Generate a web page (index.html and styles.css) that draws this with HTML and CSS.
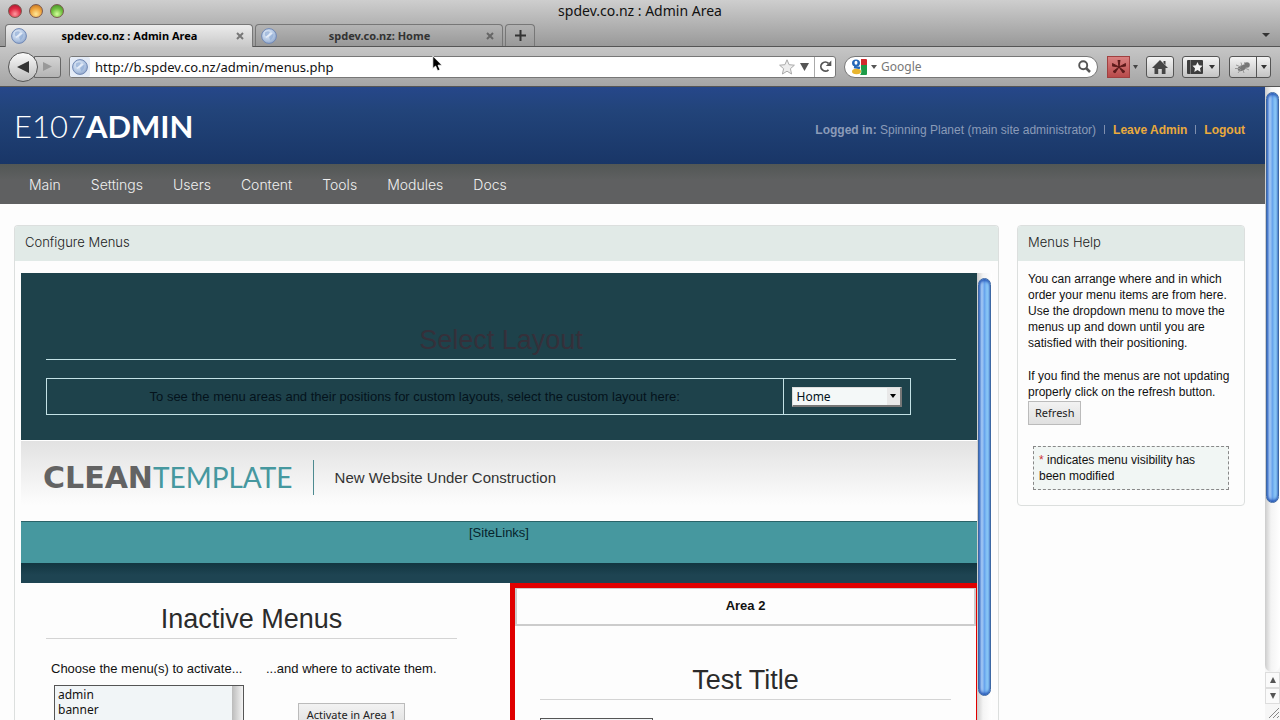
FILE: index.html
```html
<!DOCTYPE html>
<html lang="en">
<head>
<meta charset="utf-8">
<title>spdev.co.nz : Admin Area</title>
<link rel="stylesheet" href="styles.css">
</head>
<body>
<svg width="0" height="0" class="defs" aria-hidden="true">
  <defs>
    <radialGradient id="globe" cx="40%" cy="35%" r="70%"><stop offset="0" stop-color="#eef4fc"/><stop offset=".6" stop-color="#b4c8e4"/><stop offset="1" stop-color="#8fa6cc"/></radialGradient>
    <symbol id="world" viewBox="0 0 16 16"><circle cx="8" cy="8" r="7.4" fill="url(#globe)" stroke="#7088b4"/><path d="M4 4.500Q7 2.500 9 4L7.500 6.500 5 8.500Q3 7 4 4.500M8 9Q11 6 12.500 5.500 13 9 9.500 12.500Z" fill="#8fabd4" opacity=".7"/><path d="M5 9.500L11 5" stroke="#f4f8ff" stroke-width="1.500" opacity=".6"/></symbol>
  </defs>
</svg>
<div class="window">
  <header class="chrome">
    <div class="titlebar">
      <div class="lights"><button class="light red" aria-label="Close"></button><button class="light amber" aria-label="Minimise"></button><button class="light green" aria-label="Zoom"></button></div>
      <div class="window-title">spdev.co.nz : Admin Area</div>
    </div>
    <div class="tabstrip">
      <div class="tab active"><svg class="favicon"><use href="#world"/></svg><span class="tab-name">spdev.co.nz : Admin Area</span><button class="tab-close" aria-label="Close tab"><svg viewBox="0 0 8 8" width="8" height="8"><path d="M1 1L7 7M7 1L1 7" stroke="#777" stroke-width="2"/></svg></button></div>
      <div class="tab"><svg class="favicon"><use href="#world"/></svg><span class="tab-name">spdev.co.nz: Home</span><button class="tab-close" aria-label="Close tab"><svg viewBox="0 0 8 8" width="8" height="8"><path d="M1 1L7 7M7 1L1 7" stroke="#666" stroke-width="2"/></svg></button></div>
      <button class="new-tab" aria-label="New tab"><svg viewBox="0 0 11 11" width="11" height="11"><path d="M5.500 0V11M0 5.500H11" stroke="#333" stroke-width="2"/></svg></button>
      <button class="tab-list" aria-label="List all tabs"><svg viewBox="0 0 8 4" width="8" height="4"><path d="M0 0H8L4 4Z" fill="#333"/></svg></button>
    </div>
    <div class="toolbar">
      <div class="history">
        <button class="back" aria-label="Back"><svg viewBox="0 0 12 12" width="12" height="12"><path d="M12 0V12L0 6Z" fill="#333"/></svg></button>
        <button class="forward" aria-label="Forward"><svg viewBox="0 0 9 9" width="9" height="9"><path d="M0 0V9L9 4.500Z" fill="#999"/></svg></button>
      </div>
      <div class="address">
        <span class="identity"><svg class="favicon"><use href="#world"/></svg></span>
        <input class="url" type="text" aria-label="Address" value="http://b.spdev.co.nz/admin/menus.php">
        <button class="plain" aria-label="Bookmark"><svg viewBox="0 0 16 16" width="16" height="16"><path d="M8 .8L10.100 5.700 15.400 6.200 11.400 9.700 12.600 15 8 12.200 3.400 15 4.600 9.700 .6 6.200 5.900 5.700Z" fill="#ededed" stroke="#aaa"/></svg></button>
        <button class="plain" aria-label="History"><svg viewBox="0 0 9 8" width="9" height="8"><path d="M0 0H9L4.500 8Z" fill="#555"/></svg></button>
        <button class="plain reload" aria-label="Reload"><svg viewBox="0 0 13 13" width="13" height="13"><path d="M9.500 9.800A4.500 4.500 0 1 1 9.500 3.300" fill="none" stroke="#555" stroke-width="1.800"/><path d="M12.300 .5V6H6.800Z" fill="#555"/></svg></button>
      </div>
      <div class="search">
        <svg viewBox="0 0 16 16" width="16" height="16"><path d="M0 0H16V16H0Z" fill="#fff"/><path d="M10 0H15Q16 0 16 1V6H10Z" fill="#d12a2e"/><path d="M10 6H16V15Q16 16 15 16H9Q11 14 10 10Z" fill="#1d9b48"/><ellipse cx="5" cy="4" rx="4" ry="3.500" fill="#2467b8"/><ellipse cx="5" cy="3.800" rx="1.500" ry="2" fill="#fff"/><path d="M3 8L9 9" stroke="#2467b8" stroke-width="2.500"/><ellipse cx="5.500" cy="12.500" rx="4.500" ry="2.800" fill="#e9b52e"/></svg>
        <svg viewBox="0 0 6 4" width="6" height="4"><path d="M0 0H6L3 4Z" fill="#555"/></svg>
        <input class="query" type="text" aria-label="Search" placeholder="Google">
        <button class="plain" aria-label="Search"><svg viewBox="0 0 13 13" width="13" height="13"><circle cx="5.200" cy="5.200" r="4" fill="none" stroke="#555" stroke-width="1.900"/><path d="M8 8L12 12" stroke="#555" stroke-width="2.500"/></svg></button>
      </div>
      <div class="addon"><button class="lastpass" aria-label="Password manager"><svg viewBox="0 0 14 14" width="14" height="14"><path d="M7 7L6 0H8ZM7 7L13.500 3.500 13.800 6ZM7 7L13 11.500 11 13ZM7 7L1 11.500 3 13ZM7 7L.5 3.500 .2 6Z" fill="#5c1a1a" stroke="#5c1a1a" stroke-width=".9"/></svg></button><svg viewBox="0 0 5 4" width="5" height="4"><path d="M0 0H5L2.500 4Z" fill="#444"/></svg></div>
      <button class="tool home" aria-label="Home"><svg viewBox="0 0 16 14" width="16" height="14"><path d="M8 0L16 8H13.500V14H9.800V9H6.200V14H2.500V8H0Z" fill="#444"/><path d="M11.500 1H13.500V5L11.500 3Z" fill="#444"/></svg></button>
      <button class="tool marks" aria-label="Bookmarks"><svg viewBox="0 0 17 14" width="17" height="14"><rect width="16" height="14" rx="1" fill="#3d3d3d"/><path d="M3.500 0V14" stroke="#777"/><path d="M10.500 2L12 5.300 15.600 5.700 13 8.200 13.700 12 10.500 10 7.300 12 8 8.200 5.400 5.700 9 5.300Z" fill="#f3f3f3"/></svg><svg viewBox="0 0 6 4" width="6" height="4"><path d="M0 0H6L3 4Z" fill="#333"/></svg></button>
      <div class="split"><button aria-label="Firebug"><svg viewBox="0 0 16 12" width="16" height="12"><ellipse cx="7" cy="7" rx="4.500" ry="2.800" transform="rotate(-25 7 7)" fill="#777"/><circle cx="12" cy="4" r="2.800" fill="#777"/><path d="M1 4L6 6M0 7.500H5M3 12L6 8M8 9L9 12M10 7L14 9M7 5L6 1.500M9 4L10 1" stroke="#999"/></svg></button><button aria-label="Firebug menu"><svg viewBox="0 0 6 4" width="6" height="4"><path d="M0 0H6L3 4Z" fill="#333"/></svg></button></div>
    </div>
  </header>

  <div class="viewport">
    <div class="page">
      <div class="masthead">
        <div class="brand">E107<b>ADMIN</b></div>
        <div class="account"><span><b>Logged in:</b> Spinning Planet (main site administrator)</span><i class="bar"></i><a href="#leave">Leave Admin</a><i class="bar"></i><a href="#logout">Logout</a></div>
      </div>
      <nav class="menu"><a href="#main">Main</a><a href="#settings">Settings</a><a href="#users">Users</a><a href="#content">Content</a><a href="#tools">Tools</a><a href="#modules">Modules</a><a href="#docs">Docs</a></nav>
      <div class="columns">
        <main class="panel configure">
          <h1 class="panel-title">Configure Menus</h1>
          <div class="preview">
            <div class="site">
              <section class="layout-picker">
                <h2 class="heading">Select Layout</h2>
                <table class="picker"><tr><td><label for="layout">To see the menu areas and their positions for custom layouts, select the custom layout here:</label></td><td class="choice"><span class="drop"><select id="layout"><option>Home</option></select><span class="drop-arrow"><svg viewBox="0 0 6 4" width="6" height="4"><path d="M0 0H6L3 4Z" fill="#000"/></svg></span></span></td></tr></table>
              </section>
              <div class="site-head"><div class="site-logo"><b>CLEAN</b>TEMPLATE</div><div class="tagline">New Website Under Construction</div></div>
              <div class="site-links">[SiteLinks]</div>
              <div class="site-band"></div>
              <div class="areas">
                <section class="inactive">
                  <h2 class="heading">Inactive Menus</h2>
                  <div class="activate">
                    <div class="choose"><label for="menus">Choose the menu(s) to activate...</label>
                      <div class="list"><select id="menus" multiple size="8"><option>admin</option><option>banner</option></select><span class="list-track"></span></div></div>
                    <div class="where"><span>...and where to activate them.</span><button class="push wide">Activate in Area 1</button></div>
                  </div>
                </section>
                <section class="area">
                  <div class="area-name">Area 2</div>
                  <div class="area-body"><h2 class="heading">Test Title</h2><select class="action" aria-label="Menu action"><option></option></select></div>
                </section>
              </div>
            </div>
            <div class="scroll inner"><span class="thumb"></span></div>
          </div>
        </main>
        <aside class="panel help">
          <h2 class="panel-title">Menus Help</h2>
          <div class="help-body">
            <p>You can arrange where and in which order your menu items are from here. Use the dropdown menu to move the menus up and down until you are satisfied with their positioning.</p>
            <p class="second">If you find the menus are not updating properly click on the refresh button.</p>
            <button class="push">Refresh</button>
            <div class="note"><span class="star">*</span> indicates menu visibility has been modified</div>
          </div>
        </aside>
      </div>
    </div>
    <div class="outer-bar">
      <div class="scroll"><span class="thumb"></span></div>
      <button class="step" aria-label="Scroll up"><svg viewBox="0 0 6 6" width="6" height="6"><path d="M0 6H6L3 0Z" fill="#555"/></svg></button>
      <button class="step" aria-label="Scroll down"><svg viewBox="0 0 6 6" width="6" height="6"><path d="M0 0H6L3 6Z" fill="#555"/></svg></button>
      <svg class="grip" viewBox="0 0 15 16"><path d="M4 14L14 4M8 14L14 8M12 14L14 12" stroke="#888"/></svg>
    </div>
  </div>
</div>
<svg class="pointer" viewBox="0 0 11 17" width="11" height="17"><path d="M.8 1V13.500L3.600 11 5.600 15.800 8 14.800 6 10.200H10Z" fill="#000" stroke="#fff" stroke-width=".8"/></svg>
</body>
</html>
```

FILE: styles.css
```css
* { box-sizing: border-box; }
body { margin: 0; font-family: "Liberation Sans", Arial, sans-serif; font-size: 13px; color: #111; }
button { padding: 0; border: 0; background: none; font: inherit; color: inherit; display: flex; align-items: center; justify-content: center; }
input, select { font: inherit; color: inherit; }
h1, h2, p { margin: 0; }
svg { flex: none; display: block; }
.defs { position: absolute; }
.window { height: 100vh; display: flex; flex-direction: column; overflow: hidden; }

.chrome { flex: none; font-family: "Noto Sans", sans-serif; background: linear-gradient(#cecece, #989898 47px, #c6c6c6 47px, #a5a5a5); border-bottom: 1px solid #555; }
.titlebar { height: 24px; display: grid; grid-template-columns: 1fr auto 1fr; align-items: start; }
.lights { display: flex; gap: 7px; padding: 4px 0 0 8px; }
.light { width: 14px; height: 14px; border-radius: 50%; border: 1px solid #7a5a50; }
.red { background: radial-gradient(circle at 50% 75%, #ff9aa0, #e02c44 50%, #a01028); }
.amber { background: radial-gradient(circle at 50% 75%, #ffe898, #f0a640 50%, #b86818); }
.green { background: radial-gradient(circle at 50% 75%, #d6ff9c, #70c040 50%, #3c8420); }
.window-title { font-size: 14px; line-height: 22px; }
.tabstrip { height: 23px; display: flex; gap: 2px; padding: 0 10px 0 5px; border-bottom: 1px solid #555; }
.tab { width: 248px; display: flex; align-items: center; gap: 6px; padding: 0 8px 0 5px; border: 1px solid #777; border-bottom: 0; border-radius: 4px 4px 0 0; background: linear-gradient(#b4b4b4, #989898); font-size: 11px; line-height: 20px; font-weight: bold; color: #333; }
.tab.active { height: 23px; background: linear-gradient(#ececec, #c8c8c8); color: #000; }
.tab-name { flex: 1; text-align: center; padding-right: 4px; }
.favicon { width: 16px; height: 16px; }
.new-tab { width: 30px; border: 1px solid #777; border-bottom: 0; border-radius: 4px 4px 0 0; }
.tab-list { margin-left: auto; }
.toolbar { height: 39px; display: flex; align-items: center; padding: 0 9px 0 8px; }
.history { display: flex; align-items: center; margin-right: 8px; }
.back { width: 30px; height: 30px; border: 1px solid #555; border-radius: 50%; background: linear-gradient(#fafafa, #bbb); z-index: 1; }
.forward { width: 27px; height: 22px; margin-left: -4px; border: 1px solid #666; border-radius: 0 3px 3px 0; background: linear-gradient(#d4d4d4, #b4b4b4); }
.address { flex: 1; height: 22px; display: flex; align-items: center; gap: 5px; margin-right: 8px; background: #fff; border: 1px solid #777; border-radius: 3px; }
.identity { width: 20px; height: 20px; display: flex; align-items: center; justify-content: center; background: #e4ebf6; border-radius: 2px; }
.url, .query { flex: 1; min-width: 0; border: 0; padding: 0; background: none; font-size: 13px; outline: 0; }
.query { font-size: 12px; }
.query::placeholder { color: #777; opacity: 1; }
.reload { width: 21px; height: 20px; border-left: 1px solid #aaa; }
.search { width: 254px; height: 22px; display: flex; align-items: center; gap: 4px; padding: 0 6px; margin-right: 9px; background: #fff; border: 1px solid #777; border-radius: 11px; }
.addon { display: flex; align-items: center; gap: 3px; margin-right: 8px; }
.lastpass { width: 23px; height: 22px; background: linear-gradient(#d98080, #b84a4a); border: 1px solid #a04040; }
.tool, .split { height: 22px; border: 1px solid #555; border-radius: 3px; background: linear-gradient(#f4f4f4, #c4c4c4); }
.home { width: 28px; margin-right: 8px; }
.marks { width: 38px; gap: 5px; margin-right: 9px; }
.split { width: 42px; display: flex; }
.split button { flex: 1; }
.split button + button { flex: none; width: 14px; border-left: 1px solid #555; }

.viewport { flex: 1; min-height: 0; display: flex; background: #fdfdfd; }
.page { flex: 1; min-width: 0; display: flex; flex-direction: column; overflow: hidden; }
.masthead { flex: none; height: 77px; display: flex; align-items: center; justify-content: space-between; padding: 0 20px 0 14px; background: linear-gradient(#26478a, #22447a 30%, #193667); }
.brand { font: 300 31px/40px Lato, sans-serif; color: #fff; }
.brand b { font-weight: 700; }
.account { display: flex; align-items: center; padding-top: 8px; font-size: 12px; color: #8b9bb8; }
.account a { color: #eaaa3c; font-weight: bold; text-decoration: none; }
.bar { width: 1px; height: 9px; margin: 0 8px; background: #7f8fae; }
.menu { flex: none; height: 40px; display: flex; align-items: center; gap: 30px; padding: 2px 29px 0; background: linear-gradient(#525755, #5f6061 40%, #5f6061); font: 300 14px/20px Inter, sans-serif; }
.menu a { color: #f0f0f0; text-decoration: none; }
.columns { flex: 1; min-height: 0; display: flex; align-items: flex-start; gap: 18px; padding: 21px 20px 0 14px; }
.panel { border: 1px solid #dcdfde; border-radius: 4px; overflow: hidden; }
.panel-title { height: 35px; padding: 0 10px; background: #e1eae7; font: 300 13px/33px Inter, sans-serif; color: #222; }
.configure { flex: 1; min-width: 0; height: 100%; border-bottom: 0; border-radius: 4px 4px 0 0; display: flex; flex-direction: column; }
.configure .panel-title { flex: none; }
.preview { flex: 1; min-height: 0; display: flex; margin: 12px 6px 0; }
.site { flex: 1; min-width: 0; overflow: hidden; }
.heading { font-size: 27px; font-weight: normal; line-height: 38px; text-align: center; color: #2b2b2b; border-bottom: 1px solid #d4d4d4; }
.layout-picker { height: 167px; padding: 48px 21px 0 25px; background: #1e424b; }
.layout-picker .heading { color: #35303a; border-color: #c4e2e6; }
.picker { width: 95%; height: 37px; margin-top: 18px; border-collapse: collapse; text-align: center; color: #04131c; }
.picker td { border: 1px solid #c4e2e6; padding: 0; }
.picker .choice { width: 127px; }
.drop { display: flex; align-items: center; width: 110px; height: 20px; margin: 0 auto; background: #f4f8f8; border: 1px solid #ddd; border-right: 2px solid #777; border-bottom: 2px solid #777; }
.drop select { flex: 1; height: 17px; appearance: none; border: 0; background: none; padding: 0 4px; font: 12px/17px "Noto Sans", sans-serif; }
.drop-arrow { width: 13px; height: 17px; display: flex; align-items: center; justify-content: center; background: #e8e8e8; }
.site-head { height: 81px; display: flex; align-items: center; padding: 0 22px 8px; border-top: 1px solid #fff; background: linear-gradient(#e2e2e2, #fdfdfd 80%); }
.site-logo { padding-right: 20px; font: 400 28px/35px Lato, sans-serif; color: #46989f; border-right: 1px solid #4d8a90; }
.site-logo b { font: 700 30px/35px "DejaVu Sans", sans-serif; color: #636363; }
.tagline { padding-left: 21px; font-size: 15px; color: #333; }
.site-links { height: 42px; padding-top: 3px; border-top: 1px solid #2a6368; background: #46989f; text-align: center; line-height: 16px; color: #06242c; }
.site-band { height: 20px; background: linear-gradient(#123640, #1e4452 60%); }
.areas { height: 320px; display: grid; grid-template-columns: 489fr 467fr; }
.inactive { padding: 17px 53px 0 25px; }
.activate { display: flex; gap: 22px; padding: 22px 0 0 5px; white-space: nowrap; line-height: 16px; }
.list { display: flex; width: 190px; height: 130px; margin: 8px 0 0 3px; border: 1px solid #555; }
.list select { flex: 1; border: 0; padding: 0; background: #f1f5f7; font: 12px/15px "Noto Sans", sans-serif; overflow: hidden; outline: 0; scrollbar-width: none; }
.list option { height: 15px; min-height: 0; line-height: 15px; padding: 0 3px; }
.list-track { width: 11px; background: linear-gradient(90deg, #bbb, #f4f4f4); }
.where { display: flex; flex-direction: column; align-items: center; gap: 26px; }
.push { height: 24px; padding: 0 6px; border: 1px solid #bbb; background: linear-gradient(#f2f2f2, #e0e0e0); font: 11px/20px "Noto Sans", sans-serif; color: #222; }
.push.wide { padding: 0 8px; }
.area { border: 5px solid #e00000; border-right-width: 1px; }
.area-name { height: 38px; border: 2px solid #ccc; border-top-width: 1px; text-align: center; font-weight: bold; line-height: 34px; }
.area-body { padding: 35px 25px 0; }
.action { appearance: none; display: block; width: 113px; height: 20px; margin-top: 18px; border: 1px solid #555; background: #f1f5f7; }

.help { width: 228px; flex: none; }
.help-body { padding: 10px 10px 15px; font-size: 12px; line-height: 16px; }
.second { margin-top: 17px; }
.help .push { margin-top: 1px; }
.note { margin: 21px 5px 0; padding: 5px; border: 1px dashed #888; background: #f1f6f4; }
.star { color: #c33; }

.scroll { position: relative; width: 15px; padding: 5px 1px 0; background: linear-gradient(90deg, #ccc, #f4f4f4 40%, #fff); }
.thumb { display: block; border: 1px solid #3d68a4; border-radius: 7px; background: linear-gradient(90deg, #6c9ee4, #a9cbf5 25%, #68a4ec 50%, #8ccaf8 75%, #a6e0ff); box-shadow: inset 0 2px 3px #2a5ab8, inset 0 -2px 3px #2a5ab8; }
.inner .thumb { height: 418px; }
.outer-bar { width: 15px; flex: none; display: flex; flex-direction: column; background: #f6f6f6; }
.outer-bar .scroll { flex: 1; border-radius: 0 0 7px 7px; }
.outer-bar .thumb { height: 411px; }
.step { height: 16px; border: 1px solid #ddd; background: #fafafa; }
.grip { width: 15px; height: 16px; }
.pointer { position: absolute; left: 432px; top: 55px; z-index: 5; }
```
